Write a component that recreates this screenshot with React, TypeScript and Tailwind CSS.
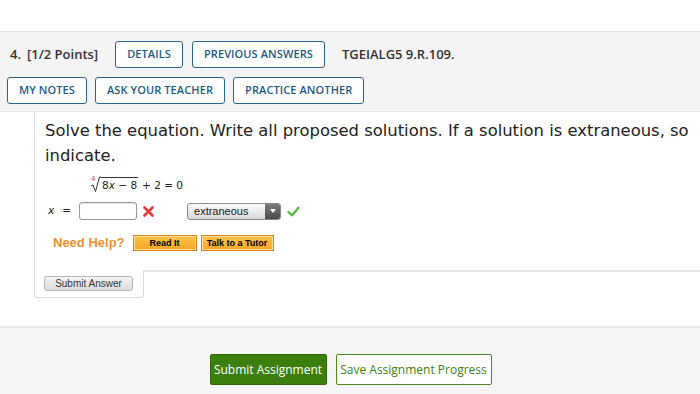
import React from 'react';

const HeaderButton: React.FC<{ label: string }> = ({ label }) => (
  <button className="h-[27px] px-[11px] border-[1.5px] border-[#2b6491] rounded-[3px] bg-white text-[11px] font-semibold text-[#1d5a86] tracking-[0.1px]">
    {label}
  </button>
);

const App: React.FC = () => {
  return (
    <div className="w-[700px] h-[394px] bg-white overflow-hidden font-['Open_Sans',sans-serif] text-[#333]">
      <div className="h-[31px]" />

      {/* question header */}
      <div className="h-[81px] bg-[#f4f4f4] border-t border-[#e2e2e2] border-b border-b-[#e8e8e8] pt-[9px]">
        <div className="flex items-center h-[27px] pl-[10px]">
          <span className="text-[13px] font-semibold text-[#333]">4.</span>
          <span className="ml-[6px] text-[13px] font-semibold text-[#333]">[1/2 Points]</span>
          <div className="ml-[17px] flex gap-[9px]">
            <HeaderButton label="DETAILS" />
            <HeaderButton label="PREVIOUS ANSWERS" />
          </div>
          <span className="ml-[17px] text-[13px] font-semibold text-[#333]">TGEIALG5 9.R.109.</span>
        </div>
        <div className="flex gap-[8px] mt-[9px] pl-[7px]">
          <HeaderButton label="MY NOTES" />
          <HeaderButton label="ASK YOUR TEACHER" />
          <HeaderButton label="PRACTICE ANOTHER" />
        </div>
      </div>

      {/* question body */}
      <div className="ml-[34px] border-l border-[#dcdcdc] h-[158px] pl-[10px] pt-[6px]">
        <p className="font-['DejaVu_Sans',sans-serif] text-[16.4px] leading-[25px] text-[#222] whitespace-nowrap">
          Solve the equation. Write all proposed solutions. If a solution is extraneous, so
          <br />
          indicate.
        </p>

        {/* equation */}
        <div className="flex items-end h-[26px] ml-[45px] font-['DejaVu_Sans',sans-serif] text-[10.5px] text-[#222]">
          <div className="relative flex items-end pb-[2px]">
            <span className="absolute left-[1px] top-[0px] text-[7px] text-[#d44] leading-none">4</span>
            <svg width="11" height="17" viewBox="0 0 11 17" className="mb-[-1px]">
              <path d="M1 10 L3 9 L5.5 15.5 L9.5 1 L11 1" fill="none" stroke="#333" strokeWidth="1" />
            </svg>
            <span className="border-t border-[#333] pt-[1px] px-[1px] leading-[13px]">
              8<i>x</i> − 8
            </span>
          </div>
          <span className="ml-[4px] pb-[2px] leading-[13px]">+ 2 = 0</span>
        </div>

        {/* answer row */}
        <div className="flex items-center h-[30px] mt-[2px]">
          <span className="ml-[3px] font-['DejaVu_Sans',sans-serif] text-[10.5px] text-[#222]">
            <i>x</i>
            <span className="ml-[8px]">=</span>
          </span>
          <div className="ml-[8px] w-[58px] h-[18px] border border-[#999] rounded-[3px] bg-white shadow-[inset_0_1px_1px_rgba(0,0,0,0.1)]" />
          <svg width="11" height="11" viewBox="0 0 11 11" className="ml-[6px]">
            <path d="M1.5 1.5 L9.5 9.5 M9.5 1.5 L1.5 9.5" stroke="#e0393e" strokeWidth="2.6" strokeLinecap="round" />
          </svg>
          <div className="ml-[33px] w-[94px] h-[17px] flex items-stretch border border-[#888] rounded-[3px] overflow-hidden bg-gradient-to-b from-[#fafafa] to-[#d9d9d9]">
            <span className="flex-1 pl-[6px] font-['Liberation_Sans',sans-serif] text-[11px] leading-[15px] text-[#222]">extraneous</span>
            <span className="w-[15px] flex items-center justify-center bg-gradient-to-b from-[#7a7a7a] to-[#4a4a4a]">
              <svg width="6" height="4" viewBox="0 0 6 4">
                <path d="M0 0 L6 0 L3 4 Z" fill="#fff" />
              </svg>
            </span>
          </div>
          <svg width="13" height="11" viewBox="0 0 13 11" className="ml-[6px]">
            <path d="M1.5 6 L5 9.3 L11.5 1.8" fill="none" stroke="#5db845" strokeWidth="2.4" strokeLinecap="round" strokeLinejoin="round" />
          </svg>
        </div>

        {/* need help */}
        <div className="flex items-center h-[18px] mt-[8px] ml-[8px] font-['Liberation_Sans',sans-serif]">
          <span className="text-[13px] font-bold text-[#f0912c]">Need Help?</span>
          <button className="ml-[8px] w-[64px] h-[16px] border border-[#d9801a] bg-gradient-to-b from-[#fcc445] to-[#f5a623] text-[9px] font-bold text-black leading-none shadow-[inset_0_0_0_1px_#fde19a]">
            Read It
          </button>
          <button className="ml-[4px] w-[73px] h-[16px] border border-[#d9801a] bg-gradient-to-b from-[#fcc445] to-[#f5a623] text-[9px] font-bold text-black leading-none shadow-[inset_0_0_0_1px_#fde19a]">
            Talk to a Tutor
          </button>
        </div>
      </div>

      {/* submit answer tab */}
      <div className="flex">
        <div className="ml-[34px] w-[110px] h-[28px] border-l border-r border-b border-[#dcdcdc] rounded-b-[3px] flex items-center pl-[9px]">
          <button className="w-[89px] h-[15px] border border-[#b5b5b5] rounded-[3px] bg-gradient-to-b from-[#f4f4f4] to-[#dcdcdc] font-['Liberation_Sans',sans-serif] text-[10px] leading-none text-[#333]">
            Submit Answer
          </button>
        </div>
        <div className="flex-1 border-t-2 border-[#e6e6e6]" />
      </div>

      <div className="h-[28px]" />

      {/* footer */}
      <div className="h-[68px] bg-[#f5f5f5] border-t-2 border-[#e8e8e8] flex justify-center items-start pt-[26px] gap-[9px] pl-[1px]">
        <button className="h-[31px] w-[117px] bg-[#3d7f0f] border border-[#2f6a08] rounded-[2px] text-[12px] text-white">
          Submit Assignment
        </button>
        <button className="h-[31px] w-[156px] bg-white border-[1.5px] border-[#4a8a1f] rounded-[2px] text-[12px] text-[#3d7f0f]">
          Save Assignment Progress
        </button>
      </div>
    </div>
  );
};

export default App;
